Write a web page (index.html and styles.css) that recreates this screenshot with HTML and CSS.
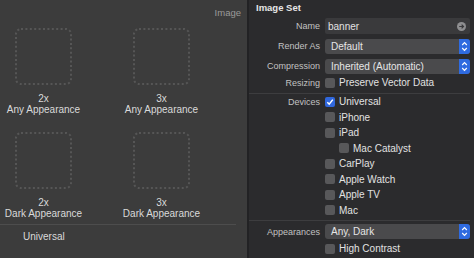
FILE: index.html
```html
<!DOCTYPE html>
<html>
<head>
<meta charset="utf-8">
<link rel="stylesheet" href="styles.css">
</head>
<body>
<div class="app">
  <section class="slots">
    <div class="slots-title">Image</div>
    <div class="grid">
      <div class="cell">
        <svg class="well" width="57" height="57" viewBox="0 0 57 57"><rect x="1" y="1" width="55" height="55" rx="5" fill="none" stroke="#565656" stroke-width="2" stroke-dasharray="2 2.4"/></svg>
        <div class="scale">2x</div>
        <div class="appear">Any Appearance</div>
      </div>
      <div class="cell">
        <svg class="well" width="57" height="57" viewBox="0 0 57 57"><rect x="1" y="1" width="55" height="55" rx="5" fill="none" stroke="#565656" stroke-width="2" stroke-dasharray="2 2.4"/></svg>
        <div class="scale">3x</div>
        <div class="appear">Any Appearance</div>
      </div>
      <div class="cell">
        <svg class="well" width="57" height="57" viewBox="0 0 57 57"><rect x="1" y="1" width="55" height="55" rx="5" fill="none" stroke="#565656" stroke-width="2" stroke-dasharray="2 2.4"/></svg>
        <div class="scale">2x</div>
        <div class="appear">Dark Appearance</div>
      </div>
      <div class="cell">
        <svg class="well" width="57" height="57" viewBox="0 0 57 57"><rect x="1" y="1" width="55" height="55" rx="5" fill="none" stroke="#565656" stroke-width="2" stroke-dasharray="2 2.4"/></svg>
        <div class="scale">3x</div>
        <div class="appear">Dark Appearance</div>
      </div>
    </div>
    <div class="slots-divider"></div>
    <div class="slots-footer">Universal</div>
  </section>

  <section class="inspector">
    <div class="heading">Image Set</div>

    <div class="row r-name">
      <span class="label">Name</span>
      <div class="field">
        <span>banner</span>
        <svg class="go" width="9" height="9" viewBox="0 0 9 9"><circle cx="4.5" cy="4.5" r="4.5" fill="#8e8e90"/><path d="M2.2 4.5h4.2M4.6 2.6l1.9 1.9-1.9 1.9" fill="none" stroke="#3a3a3c" stroke-width="1.2"/></svg>
      </div>
    </div>

    <div class="row r-pop">
      <span class="label">Render As</span>
      <div class="popup"><span>Default</span><span class="stepper"><svg width="7" height="11" viewBox="0 0 7 11"><path d="M1.2 4 3.5 1.7 5.8 4M1.2 7 3.5 9.3 5.8 7" fill="none" stroke="#fff" stroke-width="1.2"/></svg></span></div>
    </div>

    <div class="row r-pop">
      <span class="label">Compression</span>
      <div class="popup"><span>Inherited (Automatic)</span><span class="stepper"><svg width="7" height="11" viewBox="0 0 7 11"><path d="M1.2 4 3.5 1.7 5.8 4M1.2 7 3.5 9.3 5.8 7" fill="none" stroke="#fff" stroke-width="1.2"/></svg></span></div>
    </div>

    <div class="row r-check r-resize">
      <span class="label">Resizing</span>
      <label class="check"><span class="box"></span>Preserve Vector Data</label>
    </div>

    <div class="divider d1"></div>

    <div class="row r-check">
      <span class="label">Devices</span>
      <label class="check"><span class="box on"><svg width="10" height="10" viewBox="0 0 10 10"><path d="M2.3 5.2 4.2 7.2 7.8 2.6" fill="none" stroke="#fff" stroke-width="1.5"/></svg></span>Universal</label>
    </div>
    <div class="row r-check"><span class="label"></span><label class="check"><span class="box"></span>iPhone</label></div>
    <div class="row r-check"><span class="label"></span><label class="check"><span class="box"></span>iPad</label></div>
    <div class="row r-check"><span class="label"></span><label class="check indent"><span class="box"></span>Mac Catalyst</label></div>
    <div class="row r-check"><span class="label"></span><label class="check"><span class="box"></span>CarPlay</label></div>
    <div class="row r-check"><span class="label"></span><label class="check"><span class="box"></span>Apple Watch</label></div>
    <div class="row r-check"><span class="label"></span><label class="check"><span class="box"></span>Apple TV</label></div>
    <div class="row r-check"><span class="label"></span><label class="check"><span class="box"></span>Mac</label></div>

    <div class="divider d2"></div>

    <div class="row r-pop r-app">
      <span class="label">Appearances</span>
      <div class="popup"><span>Any, Dark</span><span class="stepper"><svg width="7" height="11" viewBox="0 0 7 11"><path d="M1.2 4 3.5 1.7 5.8 4M1.2 7 3.5 9.3 5.8 7" fill="none" stroke="#fff" stroke-width="1.2"/></svg></span></div>
    </div>
    <div class="row r-check r-hc"><span class="label"></span><label class="check"><span class="box"></span>High Contrast</label></div>
  </section>
</div>
</body>
</html>
```

FILE: styles.css
```css
* { box-sizing: border-box; }
html, body { margin: 0; padding: 0; }
body {
  width: 474px;
  height: 258px;
  overflow: hidden;
  background: #2b2b2d;
  font-family: "Liberation Sans", Arial, sans-serif;
  font-size: 10px;
  -webkit-font-smoothing: antialiased;
}
.app {
  display: flex;
  height: 258px;
}

/* Left: image slots */
.slots {
  width: 249px;
  flex: none;
  background: #3c3c3c;
  border-right: 2px solid #222224;
  display: flex;
  flex-direction: column;
}
.slots-title {
  height: 20px;
  padding: 7px 6px 0 0;
  text-align: right;
  font-size: 9.5px;
  line-height: 11px;
  color: #9a9a9a;
}
.grid {
  margin-top: 8px;
  display: grid;
  grid-template-columns: 87px 87px;
  column-gap: 31px;
  row-gap: 17px;
}
.cell {
  display: flex;
  flex-direction: column;
  align-items: center;
}
.well { display: block; }
.scale {
  margin-top: 8px;
  line-height: 11px;
  color: #dadada;
  white-space: nowrap;
}
.appear {
  line-height: 11px;
  color: #dadada;
  white-space: nowrap;
}
.slots-divider {
  margin-top: 5px;
  width: 236px;
  height: 1px;
  background: #4d4d4d;
}
.slots-footer {
  padding: 6px 0 0 23px;
  line-height: 11px;
  color: #dadada;
}

/* Right: inspector */
.inspector {
  flex: 1;
  display: flex;
  flex-direction: column;
  padding-right: 4px;
  color: #e2e2e2;
}
.heading {
  height: 15px;
  padding: 2px 0 0 7px;
  font-weight: bold;
  font-size: 9.5px;
  line-height: 11px;
  color: #e6e6e6;
}
.row {
  display: flex;
  align-items: center;
}
.label {
  width: 76px;
  flex: none;
  padding-right: 5px;
  text-align: right;
  font-size: 9px;
  color: #c2c2c2;
  white-space: nowrap;
}
.r-name { height: 16px; margin-top: 3px; }
.r-pop { height: 16px; margin-top: 4px; }
.r-resize { margin-top: 1px; }
.r-check { height: 15.5px; }

.field {
  flex: 1;
  height: 16px;
  background: #3a3a3c;
  border-radius: 2px;
  display: flex;
  align-items: center;
  justify-content: space-between;
  padding: 0 4px 0 3px;
  line-height: 11px;
}
.go { display: block; }

.popup {
  flex: 1;
  height: 15px;
  background: #4a4a4c;
  border-radius: 3px;
  display: flex;
  align-items: center;
  justify-content: space-between;
  padding-left: 6px;
  line-height: 11px;
  color: #e6e6e6;
}
.stepper {
  width: 11px;
  height: 15px;
  background: #2f6be0;
  border-radius: 0 3px 3px 0;
  display: flex;
  align-items: center;
  justify-content: center;
}
.stepper svg { display: block; }

.check {
  display: flex;
  align-items: center;
  gap: 4px;
  line-height: 11px;
  color: #e2e2e2;
}
.check.indent { margin-left: 14px; }
.box {
  width: 10px;
  height: 10px;
  border-radius: 2px;
  background: #58585a;
  flex: none;
  display: flex;
}
.box.on { background: #3067dc; }
.box svg { display: block; }

.divider {
  height: 1px;
  background: #3d3d3f;
}
.d1 { margin-top: 2px; margin-bottom: 0.5px; }
.d2 { margin-top: 1.5px; }
.r-app { margin-top: 3px; }
.r-hc { margin-top: 1.5px; height: 15px; }
```
